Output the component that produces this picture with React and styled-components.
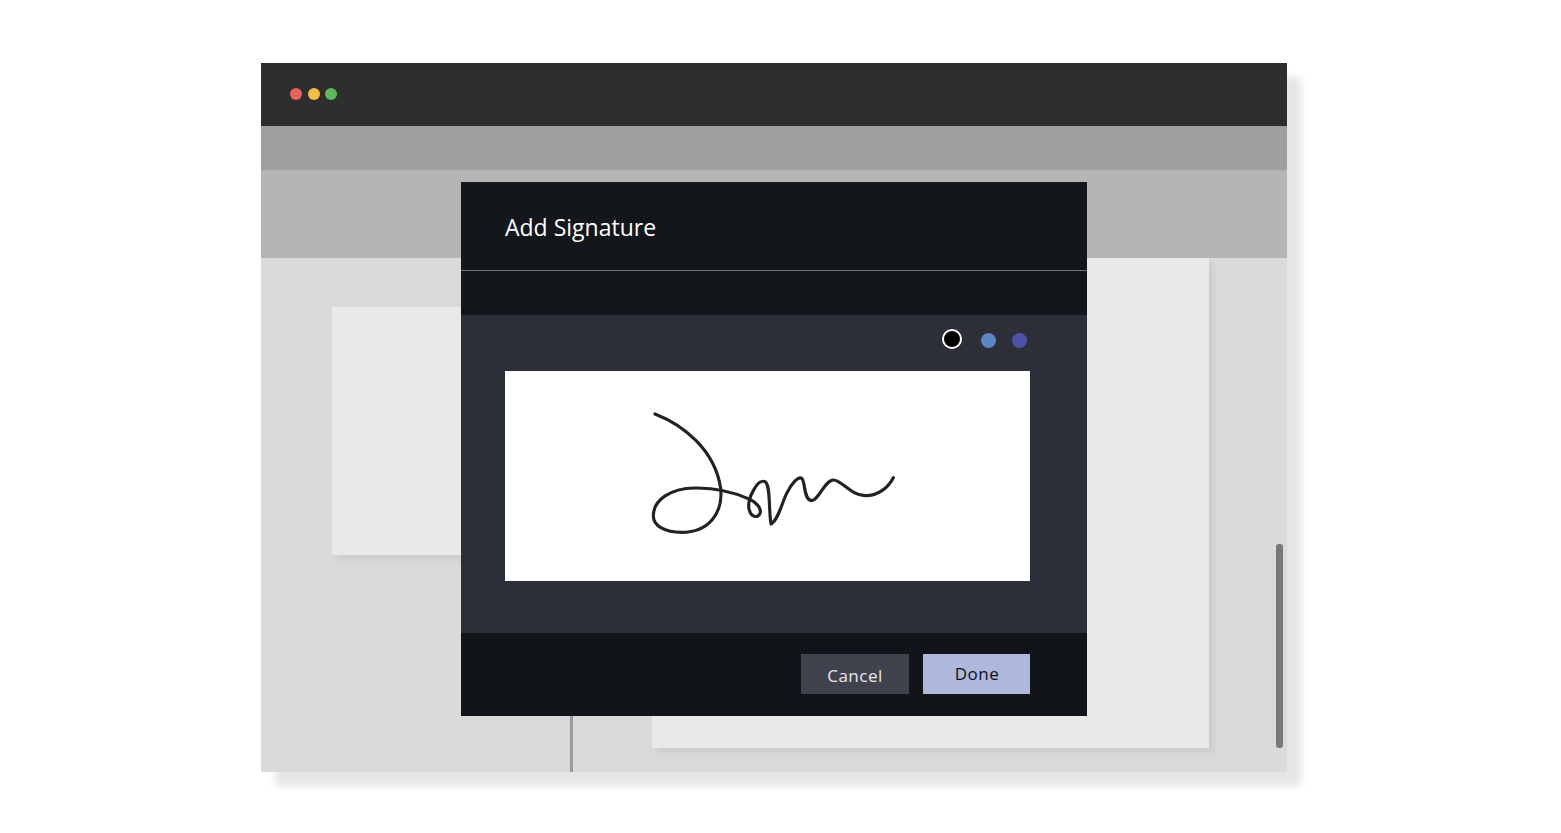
import React from 'react';
import styled, { createGlobalStyle } from 'styled-components';

const GlobalStyle = createGlobalStyle`
  html, body {
    margin: 0;
    background: #fff;
    font-family: 'Open Sans', sans-serif;
  }
`;

const Page = styled.div`
  height: 833px;
  box-sizing: border-box;
  padding: 63px 0 0 261px;
  overflow: hidden;
`;

const Window = styled.div`
  position: relative;
  width: 1026px;
  height: 709px;
  display: flex;
  flex-direction: column;
  box-shadow: 14px 14px 8px #e5e5e7;
`;

const TitleBar = styled.div`
  height: 63px;
  flex: none;
  box-sizing: border-box;
  display: flex;
  align-items: center;
  gap: 5.5px;
  padding: 0 0 1px 29px;
  background: #2e2e2e;
`;

const Light = styled.span`
  width: 12px;
  height: 12px;
  border-radius: 50%;
  background: ${(p) => p.$color};
`;

const Band = styled.div`
  height: ${(p) => p.$height}px;
  flex: none;
  background: ${(p) => p.$color};
`;

const Content = styled.div`
  position: relative;
  flex: 1;
  display: flex;
  background: #dadada;
`;

const SideColumn = styled.div`
  width: 312px;
  flex: none;
  box-sizing: border-box;
  padding: 49px 0 0 71px;
  border-right: 3px solid #9b9ca2;
`;

const MainColumn = styled.div`
  flex: 1;
  padding-left: 79px;
`;

const Sheet = styled.div`
  width: ${(p) => p.$width}px;
  height: ${(p) => p.$height}px;
  background: #e9e9e9;
  box-shadow: 5px 5px 5px #cdcdcd;
`;

const Scrollbar = styled.div`
  position: absolute;
  right: 4px;
  bottom: 24px;
  width: 7px;
  height: 204px;
  border-radius: 3px;
  background: #78787c;
`;

const Modal = styled.div`
  position: absolute;
  left: 200px;
  top: 119px;
  width: 626px;
  height: 534px;
  display: flex;
  flex-direction: column;
  background: #13161b;
`;

const ModalHeader = styled.div`
  height: 89px;
  flex: none;
  display: flex;
  align-items: center;
  padding: 1px 0 0 44px;
  box-sizing: border-box;
  border-bottom: 1px solid #727478;
  color: #fff;
  font-size: 23px;
`;

const Spacer = styled.div`
  height: 44px;
  flex: none;
`;

const ModalBody = styled.div`
  flex: 1;
  display: flex;
  flex-direction: column;
  padding: 14px 0 0 44px;
  background: #2c2f37;
`;

const Swatches = styled.div`
  width: 525px;
  height: 42px;
  flex: none;
  display: flex;
  justify-content: flex-end;
  align-items: flex-start;
  gap: 16px;
  padding-right: 3px;
  box-sizing: border-box;
`;

const Swatch = styled.span`
  width: ${(p) => (p.$selected ? 20 : 15)}px;
  height: ${(p) => (p.$selected ? 20 : 15)}px;
  margin: ${(p) => (p.$selected ? '0 3px 0 0' : '3.5px 0 0')};
  box-sizing: border-box;
  border-radius: 50%;
  border: ${(p) => (p.$selected ? '2px solid #fff' : 'none')};
  background: ${(p) => p.$color};
`;

const Canvas = styled.div`
  width: 525px;
  height: 210px;
  flex: none;
  box-sizing: border-box;
  padding: 29px 0 0 135px;
  background: #fff;
`;

const ModalFooter = styled.div`
  height: 83px;
  flex: none;
  display: flex;
  justify-content: flex-end;
  gap: 14px;
  box-sizing: border-box;
  padding: 21px 57px 0 0;
  background: #11151a;
`;

const Button = styled.button`
  width: ${(p) => p.$width}px;
  height: 40px;
  padding: 0;
  border: 0;
  border-radius: 0;
  font-family: 'Open Sans', sans-serif;
  font-size: 17px;
  letter-spacing: 0.5px;
`;

const CancelButton = styled(Button)`
  padding-top: 2px;
  background: #40434e;
  color: #e8e8ea;
`;

const DoneButton = styled(Button)`
  padding: 0 0 2px 1px;
  background: #adb8db;
  color: #0e111a;
`;

const Signature = () => (
  <svg width="270" height="145" viewBox="0 0 810 435" fill="none">
    <path
      d="M45 42C130 75 225 150 242 265C250 340 205 397 125 397C75 397 40 378 40 348C40 300 90 265 165 264C230 263 290 280 330 298C350 308 365 325 360 340C355 353 340 352 332 340C320 320 328 290 342 268C352 250 365 240 375 245C392 255 385 320 393 372C415 360 425 310 440 280C455 250 475 228 485 235C497 245 490 300 515 302C535 302 555 240 580 240C605 240 630 285 675 287C715 288 745 262 760 233"
      stroke="#222"
      strokeWidth="9.5"
      strokeLinecap="round"
      strokeLinejoin="round"
    />
  </svg>
);

const App = () => (
  <Page>
    <GlobalStyle />
    <Window>
      <TitleBar>
        <Light $color="#e5655c" />
        <Light $color="#f4bd43" />
        <Light $color="#5eb95a" />
      </TitleBar>
      <Band $height={44} $color="#9f9f9f" />
      <Band $height={88} $color="#b5b5b5" />
      <Content>
        <SideColumn>
          <Sheet $width={220} $height={248} />
        </SideColumn>
        <MainColumn>
          <Sheet $width={557} $height={490} />
        </MainColumn>
        <Scrollbar />
      </Content>
      <Modal>
        <ModalHeader>Add Signature</ModalHeader>
        <Spacer />
        <ModalBody>
          <Swatches>
            <Swatch $selected $color="#000" />
            <Swatch $color="#5a86c5" />
            <Swatch $color="#4d52a8" />
          </Swatches>
          <Canvas>
            <Signature />
          </Canvas>
        </ModalBody>
        <ModalFooter>
          <CancelButton $width={108}>Cancel</CancelButton>
          <DoneButton $width={107}>Done</DoneButton>
        </ModalFooter>
      </Modal>
    </Window>
  </Page>
);

export default App;
